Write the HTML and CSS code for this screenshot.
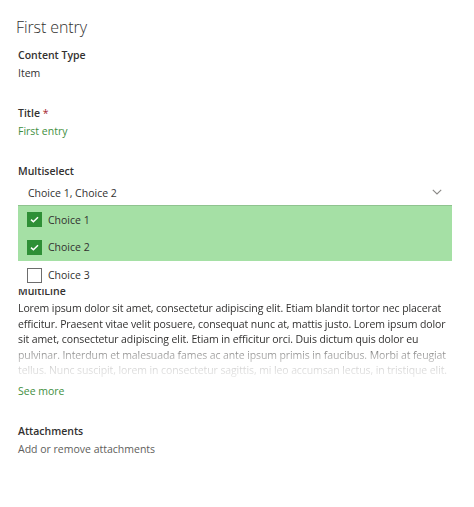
FILE: index.html
```html
<!DOCTYPE html>
<html>
<head>
<meta charset="utf-8">
<link rel="stylesheet" href="styles.css">
</head>
<body>
<div class="form">
  <h1 class="heading">First entry</h1>

  <div class="field">
    <div class="label">Content Type</div>
    <div class="value">Item</div>
  </div>

  <div class="field">
    <div class="label">Title <span class="req">*</span></div>
    <div class="value link">First entry</div>
  </div>

  <div class="field multiselect">
    <div class="label">Multiselect</div>
    <div class="dropdown">
      <span class="dropdown-text">Choice 1, Choice 2</span>
      <svg class="chevron" width="10" height="6" viewBox="0 0 10 6"><path d="M0.8 0.8 L5 5 L9.2 0.8" fill="none" stroke="#8a8886" stroke-width="1.1"/></svg>
    </div>
    <div class="options">
      <div class="option selected">
        <span class="box checked"><svg width="9" height="7" viewBox="0 0 9 7"><path d="M1 3.6 L3.4 5.8 L8 1.2" fill="none" stroke="#fff" stroke-width="1.5"/></svg></span>
        <span class="opt-text">Choice 1</span>
      </div>
      <div class="option selected">
        <span class="box checked"><svg width="9" height="7" viewBox="0 0 9 7"><path d="M1 3.6 L3.4 5.8 L8 1.2" fill="none" stroke="#fff" stroke-width="1.5"/></svg></span>
        <span class="opt-text">Choice 2</span>
      </div>
      <div class="option">
        <span class="box"></span>
        <span class="opt-text">Choice 3</span>
      </div>
    </div>
  </div>

  <div class="field multiline-field">
    <div class="label">MultiLine</div>
    <div class="multiline">Lorem ipsum dolor sit amet, consectetur adipiscing elit. Etiam blandit tortor nec placerat<br>efficitur. Praesent vitae velit posuere, consequat nunc at, mattis justo. Lorem ipsum dolor<br>sit amet, consectetur adipiscing elit. Etiam in efficitur orci. Duis dictum quis dolor eu<br>pulvinar. Interdum et malesuada fames ac ante ipsum primis in faucibus. Morbi at feugiat<br>tellus. Nunc suscipit, lorem in consectetur sagittis, mi leo accumsan lectus, in tristique elit.</div>
    <div class="link see-more">See more</div>
  </div>

  <div class="field">
    <div class="label">Attachments</div>
    <div class="value muted">Add or remove attachments</div>
  </div>
</div>
</body>
</html>
```

FILE: styles.css
```css
html, body {
  margin: 0;
  padding: 0;
  background: #ffffff;
}

body {
  font-family: "Open Sans", "Noto Sans", sans-serif;
  font-size: 10.5px;
  color: #323130;
}

.form {
  width: 440px;
  padding: 15px 16px 0 18px;
}

.heading {
  margin: 0 0 8px -2px;
  font-size: 16px;
  font-weight: 300;
  letter-spacing: -0.1px;
  line-height: 24px;
  color: #323130;
}

.field {
  margin-bottom: 24px;
}

.label {
  font-weight: 600;
  line-height: 16px;
  margin-bottom: 2px;
}

.req {
  color: #a4262c;
  font-weight: 400;
}

.value {
  line-height: 16px;
}

.link {
  color: #3f8f3f;
  line-height: 16px;
}

.muted {
  color: #605e5c;
}

.multiselect {
  position: relative;
  margin-bottom: 78px;
  width: 434px;
}

.dropdown {
  height: 24px;
  display: flex;
  align-items: center;
  justify-content: space-between;
  padding: 0 10px 0 10px;
}

.dropdown-text {
  line-height: 24px;
}

.chevron {
  display: block;
  margin-top: -2px;
}

.options {
  position: absolute;
  left: 0;
  right: 0;
  top: 42px;
  background: #ffffff;
  z-index: 2;
}

.option {
  height: 28px;
  display: flex;
  align-items: center;
  padding-left: 9px;
}

.option.selected {
  background: #a5e0a5;
}

.option.selected:first-child {
  border-top: 1px solid #8fc38f;
  height: 27px;
}

.box {
  width: 13px;
  height: 13px;
  border: 1px solid #6d6d6d;
  display: flex;
  align-items: center;
  justify-content: center;
  margin-right: 6px;
  background: #ffffff;
}

.box.checked {
  background: #2e8f36;
  border-color: #2e8f36;
}

.opt-text {
  line-height: 16px;
}

.multiline {
  margin-top: 2px;
  line-height: 15.5px;
  letter-spacing: -0.1px;
  white-space: nowrap;
  -webkit-mask-image: linear-gradient(to bottom, #000 0%, #000 55%, rgba(0,0,0,0.42) 70%, rgba(0,0,0,0.16) 90%, rgba(0,0,0,0.1) 100%);
  mask-image: linear-gradient(to bottom, #000 0%, #000 55%, rgba(0,0,0,0.42) 70%, rgba(0,0,0,0.16) 90%, rgba(0,0,0,0.1) 100%);
}

.see-more {
  margin-top: 4px;
}
```
